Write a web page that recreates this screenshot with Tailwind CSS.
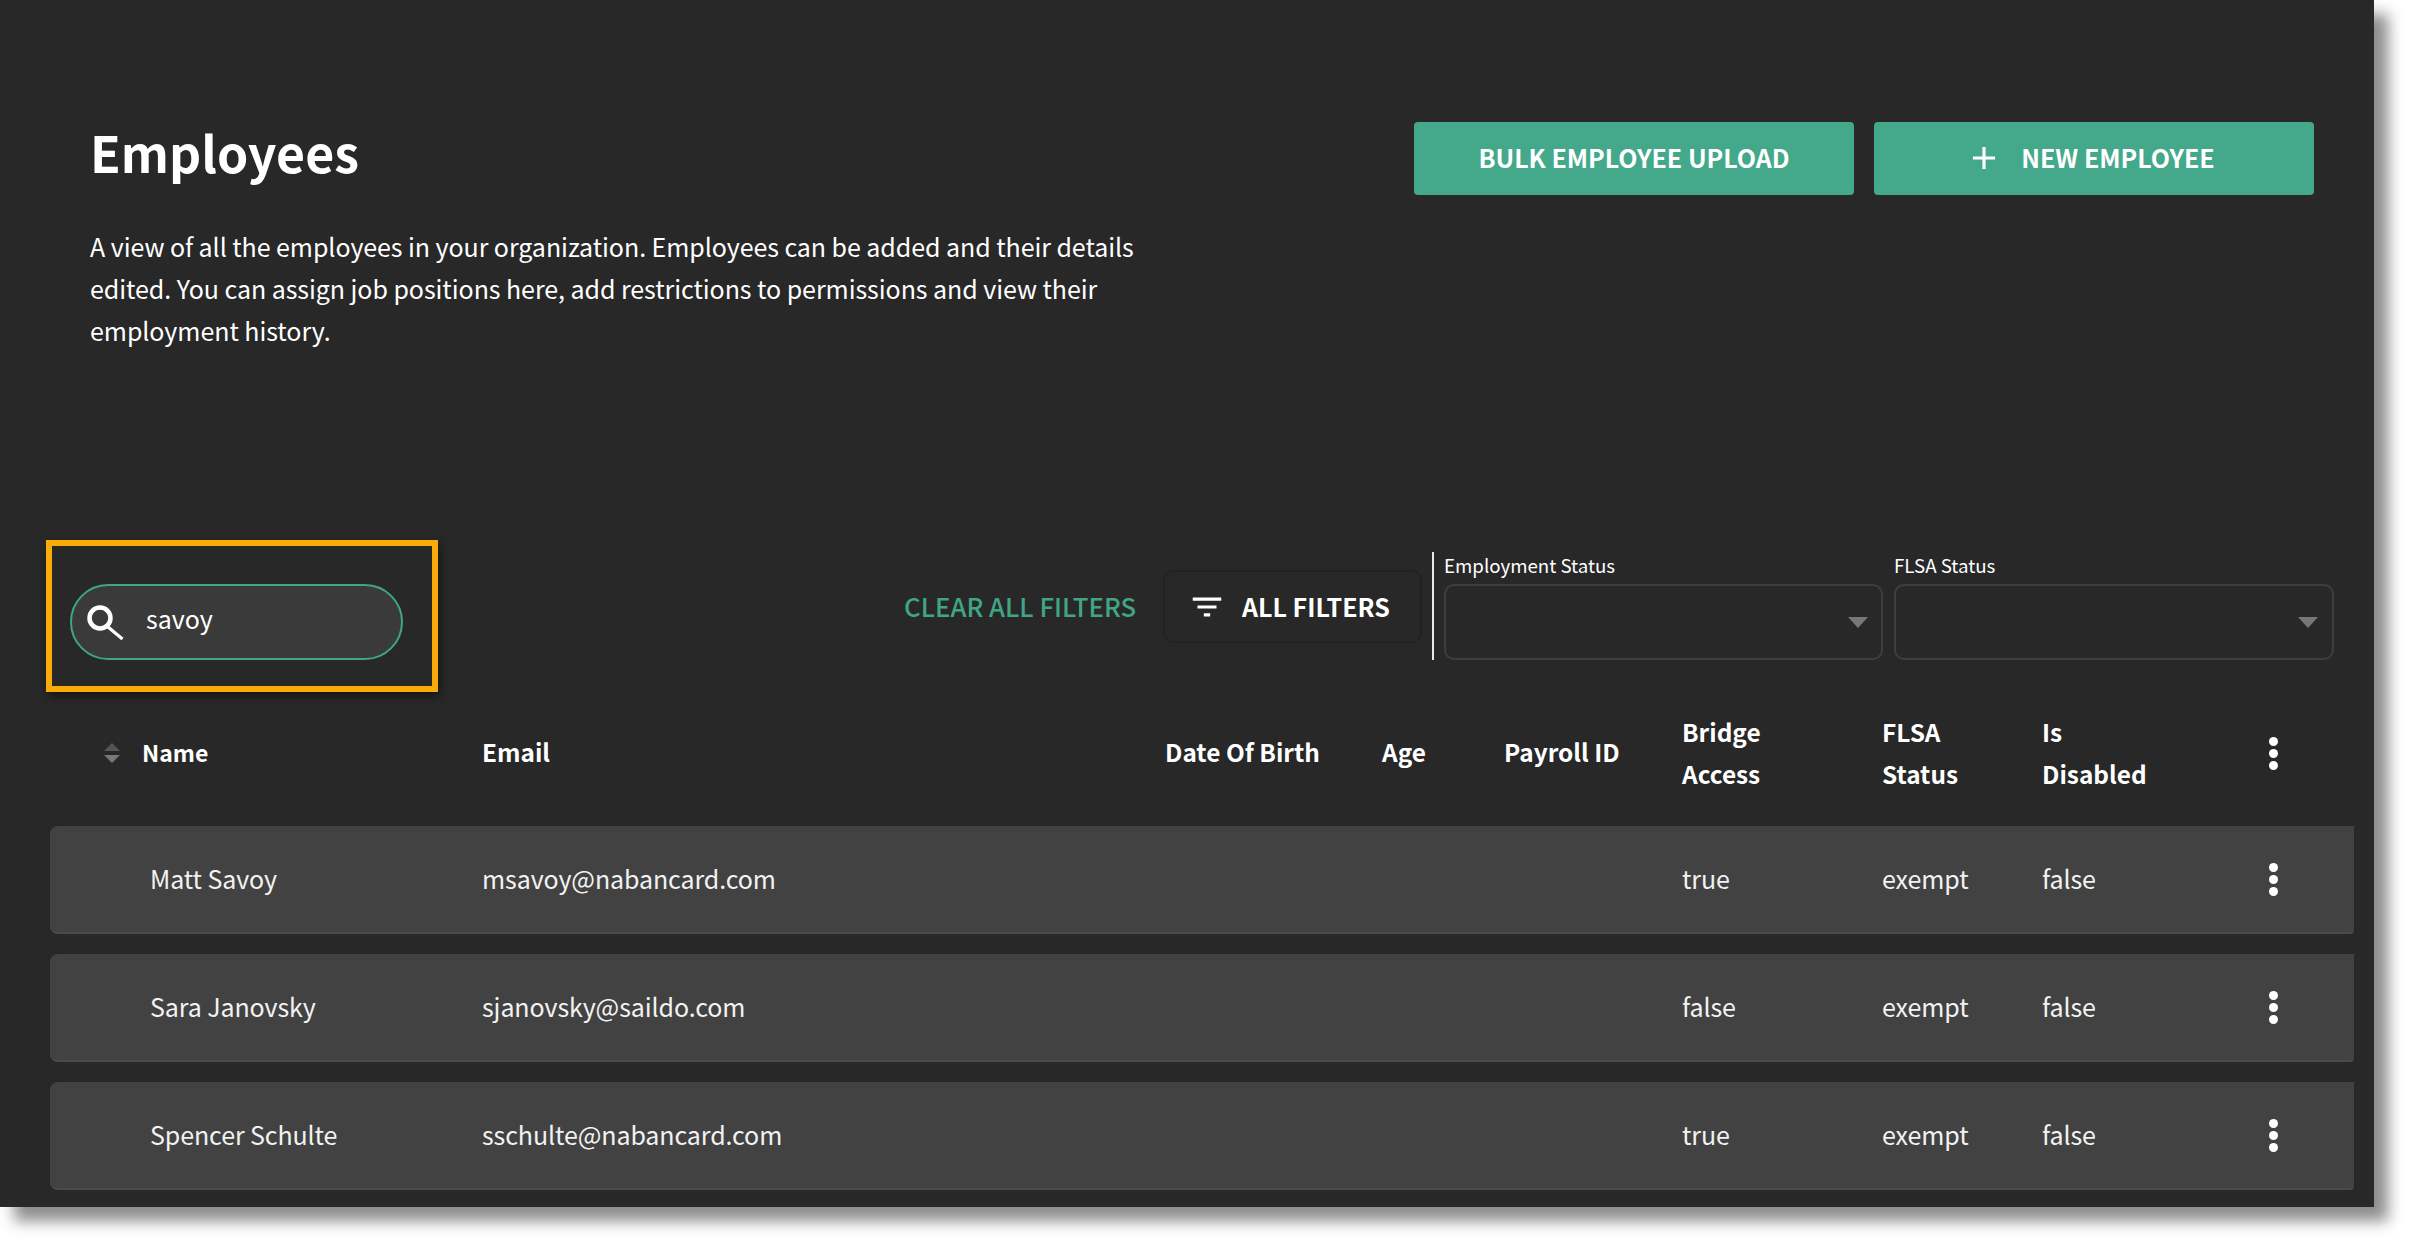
<!DOCTYPE html>
<html lang="en">
<head>
    <meta charset="UTF-8">
    <title>Employees</title>
    <script src="https://cdn.jsdelivr.net/npm/@tailwindcss/browser@4"></script>
</head>
<body class="bg-white w-[2414px] h-[1247px] overflow-hidden font-['Noto_Sans_CJK_SC','Noto_Sans',sans-serif] text-white">
    <div class="w-[2374px] h-[1207px] bg-[#282828] shadow-[14px_14px_14px_rgba(0,0,0,0.45)]">

        <!-- page header -->
        <div class="h-[540px] flex justify-between pl-[90px] pr-[60px] pt-[122px]">
            <div>
                <h1 class="text-[50px] leading-[73px] font-semibold -mt-[7px]">Employees</h1>
                <p class="w-[1100px] mt-[37px] text-[25px] tracking-[-0.06px] leading-[42px]">A view of all the employees in your organization. Employees can be added and their details edited. You can assign job positions here, add restrictions to permissions and view their employment history.</p>
            </div>
            <div class="flex gap-[20px]">
                <button class="w-[440px] h-[73px] pb-[2px] bg-[#44a98b] rounded-[4px] text-[25px] font-semibold flex items-center justify-center">BULK EMPLOYEE UPLOAD</button>
                <button class="w-[440px] h-[73px] pb-[2px] pr-[8px] bg-[#44a98b] rounded-[4px] text-[25px] font-semibold flex items-center justify-center gap-[18px]">
                    <svg class="w-[38px] h-[38px]" viewBox="0 0 24 24" fill="currentColor"><path d="M19 13h-6v6h-2v-6H5v-2h6V5h2v6h6v2z"/></svg>
                    NEW EMPLOYEE
                </button>
            </div>
        </div>

        <!-- search and filters -->
        <div class="h-[152px] flex pl-[46px] pr-[40px]">
            <div class="w-[392px] h-[152px] border-[6px] border-[#fbab07] shadow-[2px_4px_8px_rgba(0,0,0,0.5)] flex items-center pl-[18px] pt-[11px]">
                <div class="w-[333px] h-[76px] rounded-full border-2 border-[#41a585] bg-[#3a3a3a] flex items-center pl-[10px]">
                    <svg class="w-[48px] h-[48px] shrink-0" viewBox="0 0 48 48" fill="none" stroke="currentColor"><circle cx="18" cy="20" r="10.5" stroke-width="4.5"/><path d="M26 29l14.5 12" stroke-width="3.2"/></svg>
                    <span class="ml-[16px] text-[25px] -mt-[5px]">savoy</span>
                </div>
            </div>
            <div class="ml-auto mt-[12px] h-[108px] flex items-start">
                <div class="mt-[18px] h-[73px] flex items-center text-[25.7px] font-medium text-[#41a585]">CLEAR ALL FILTERS</div>
                <button class="ml-[27px] mt-[18px] w-[259px] h-[73px] border-2 border-[#222222] rounded-[10px] flex items-center pl-[23px] gap-[16px] text-[25px] font-semibold">
                    <svg class="w-[38px] h-[38px]" viewBox="0 0 24 24" fill="currentColor"><path d="M10 18h4v-2h-4v2zM3 6v2h18V6H3zm3 7h12v-2H6v2z"/></svg>
                    ALL FILTERS
                </button>
                <div class="ml-[10px] w-[2px] h-[108px] bg-[#e8e8e8]"></div>
                <div class="ml-[10px] w-[439px]">
                    <div class="h-[32px] text-[18.7px] leading-[25px]">Employment Status</div>
                    <div class="h-[76px] border-2 border-[#3e3e3e] rounded-[10px] flex items-center justify-end pr-[13px]">
                        <svg class="w-[20px] h-[11px]" viewBox="0 0 20 11" fill="#777777"><path d="M0 0h20L10 11z"/></svg>
                    </div>
                </div>
                <div class="ml-[11px] w-[440px]">
                    <div class="h-[32px] text-[18.7px] leading-[25px]">FLSA Status</div>
                    <div class="h-[76px] border-2 border-[#3e3e3e] rounded-[10px] flex items-center justify-end pr-[14px]">
                        <svg class="w-[20px] h-[11px]" viewBox="0 0 20 11" fill="#777777"><path d="M0 0h20L10 11z"/></svg>
                    </div>
                </div>
            </div>
        </div>

        <!-- table -->
        <div class="ml-[50px] w-[2304px]">
            <div class="h-[122px] mb-[12px] grid grid-cols-[433px_683px_216px_122px_178px_200px_161px_206px_50px] items-center text-[24.4px] leading-[42px] font-semibold">
                <div class="flex items-center pl-[54px]">
                    <svg class="w-[16px] h-[20px]" viewBox="0 0 16 20"><path d="M8 0l8 8H0z" fill="#555555"/><path d="M0 12h16l-8 8z" fill="#777777"/></svg>
                    <span class="ml-[22px] text-[23px] font-bold -mt-[2px]">Name</span>
                </div>
                <div class="-ml-[1px] -mt-[2px]">Email</div>
                <div class="-ml-[1px] -mt-[2px]">Date Of Birth</div>
                <div class="-mt-[2px]">Age</div>
                <div class="-mt-[2px]">Payroll ID</div>
                <div class="w-[90px] -mt-[1px]">Bridge Access</div>
                <div class="w-[80px] -mt-[1px]">FLSA Status</div>
                <div class="w-[110px] -ml-[1px] -mt-[1px]">Is Disabled</div>
                <div class="flex flex-col items-center gap-[3px] -ml-[1px]">
                    <span class="w-[9px] h-[9px] rounded-full bg-white"></span>
                    <span class="w-[9px] h-[9px] rounded-full bg-white"></span>
                    <span class="w-[9px] h-[9px] rounded-full bg-white"></span>
                </div>
            </div>
            <div class="flex flex-col gap-[20px]">
                <div class="h-[108px] bg-[#424242] border-b-2 border-[#4a4a4a] rounded-l-[8px] rounded-br-[4px] grid grid-cols-[433px_683px_216px_122px_178px_200px_161px_206px_50px] items-center text-[25px] tracking-[-0.1px] text-[#f2f2f2]">
                    <div class="pl-[100px]">Matt Savoy</div>
                    <div class="-ml-[1px]">msavoy@nabancard.com</div>
                    <div></div>
                    <div></div>
                    <div></div>
                    <div>true</div>
                    <div>exempt</div>
                    <div class="-ml-[1px]">false</div>
                    <div class="flex flex-col items-center gap-[3px] -ml-[1px]">
                        <span class="w-[9px] h-[9px] rounded-full bg-white"></span>
                        <span class="w-[9px] h-[9px] rounded-full bg-white"></span>
                        <span class="w-[9px] h-[9px] rounded-full bg-white"></span>
                    </div>
                </div>
                <div class="h-[108px] bg-[#424242] border-b-2 border-[#4a4a4a] rounded-l-[8px] rounded-br-[4px] grid grid-cols-[433px_683px_216px_122px_178px_200px_161px_206px_50px] items-center text-[25px] tracking-[-0.1px] text-[#f2f2f2]">
                    <div class="pl-[100px]">Sara Janovsky</div>
                    <div class="-ml-[1px]">sjanovsky@saildo.com</div>
                    <div></div>
                    <div></div>
                    <div></div>
                    <div>false</div>
                    <div>exempt</div>
                    <div class="-ml-[1px]">false</div>
                    <div class="flex flex-col items-center gap-[3px] -ml-[1px]">
                        <span class="w-[9px] h-[9px] rounded-full bg-white"></span>
                        <span class="w-[9px] h-[9px] rounded-full bg-white"></span>
                        <span class="w-[9px] h-[9px] rounded-full bg-white"></span>
                    </div>
                </div>
                <div class="h-[108px] bg-[#424242] border-b-2 border-[#4a4a4a] rounded-l-[8px] rounded-br-[4px] grid grid-cols-[433px_683px_216px_122px_178px_200px_161px_206px_50px] items-center text-[25px] tracking-[-0.1px] text-[#f2f2f2]">
                    <div class="pl-[100px]">Spencer Schulte</div>
                    <div class="-ml-[1px]">sschulte@nabancard.com</div>
                    <div></div>
                    <div></div>
                    <div></div>
                    <div>true</div>
                    <div>exempt</div>
                    <div class="-ml-[1px]">false</div>
                    <div class="flex flex-col items-center gap-[3px] -ml-[1px]">
                        <span class="w-[9px] h-[9px] rounded-full bg-white"></span>
                        <span class="w-[9px] h-[9px] rounded-full bg-white"></span>
                        <span class="w-[9px] h-[9px] rounded-full bg-white"></span>
                    </div>
                </div>
            </div>
        </div>
    </div>
</body>
</html>
